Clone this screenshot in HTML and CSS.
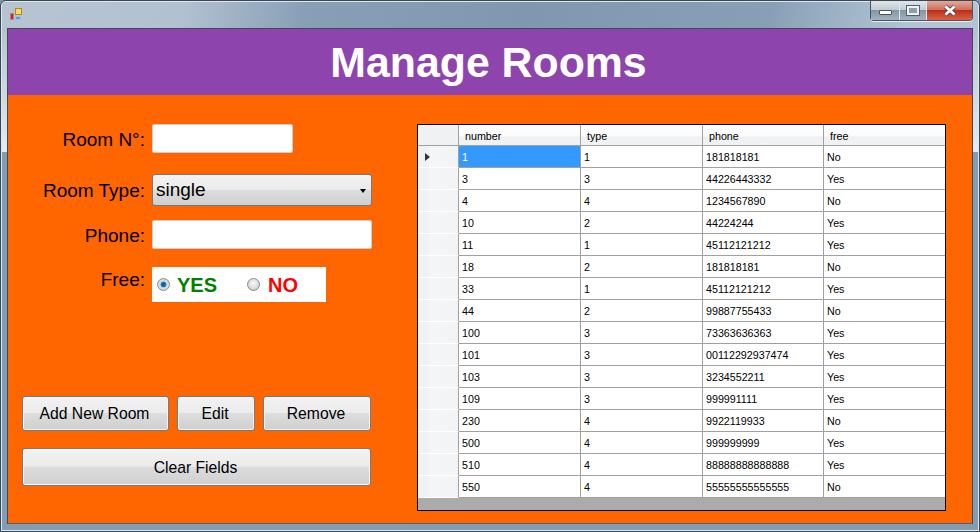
FILE: index.html
```html
<!DOCTYPE html>
<html lang="en">
<head>
<meta charset="utf-8">
<title>Manage Rooms</title>
<link rel="stylesheet" href="styles.css">
</head>
<body>
<div class="window">
  <div class="titlebar">
    <svg class="app-icon" width="14" height="14" viewBox="0 0 14 14">
      <rect x="0.5" y="5.5" width="3" height="6" fill="#c22" stroke="#a88"/>
      <rect x="5.5" y="0.5" width="6" height="6" fill="#fbd95f" stroke="#b8860b"/>
      <rect x="5.5" y="8.5" width="5" height="3" fill="#5b9be8" stroke="#9cc0ee"/>
    </svg>
    <div class="controls">
      <div class="ctl ctl-min"><span class="min-glyph"></span></div>
      <div class="ctl ctl-max"><span class="max-glyph"></span></div>
      <div class="ctl ctl-close">
        <svg width="14" height="11" viewBox="0 0 14 11"><path d="M2.5 1.5 L11.5 9.5 M11.5 1.5 L2.5 9.5" stroke="#4a4a4a" stroke-width="4.4" fill="none"/><path d="M2.5 1.5 L11.5 9.5 M11.5 1.5 L2.5 9.5" stroke="#fff" stroke-width="2.8" fill="none"/></svg>
      </div>
    </div>
  </div>
  <div class="client">
    <header class="banner"><h1>Manage Rooms</h1></header>
    <main class="content">
      <section class="form">
        <div class="fields">
          <div class="row row-room">
            <label class="lbl">Room N°:</label>
            <input class="text text-short" type="text">
          </div>
          <div class="row row-type">
            <label class="lbl">Room Type:</label>
            <div class="combo"><span>single</span><i class="arrow"></i></div>
          </div>
          <div class="row row-phone">
            <label class="lbl">Phone:</label>
            <input class="text" type="text">
          </div>
          <div class="row row-free">
            <label class="lbl lbl-free">Free:</label>
            <div class="radios">
              <span class="radio on"></span><span class="yes">YES</span>
              <span class="radio"></span><span class="no">NO</span>
            </div>
          </div>
        </div>
        <div class="actions">
          <div class="btn-row">
            <button class="btn btn-add">Add New Room</button>
            <button class="btn btn-edit">Edit</button>
            <button class="btn btn-remove">Remove</button>
          </div>
          <button class="btn btn-clear">Clear Fields</button>
        </div>
      </section>
      <section class="grid">
        <table>
          <colgroup><col class="c0"><col class="c1"><col class="c1"><col class="c3"><col class="c4"></colgroup>
          <thead><tr><th class="corner"></th><th>number</th><th>type</th><th>phone</th><th>free</th></tr></thead>
          <tbody>
            <tr class="current"><th class="rh"><i class="marker"></i></th><td class="sel">1</td><td>1</td><td>181818181</td><td>No</td></tr>
            <tr><th class="rh"></th><td>3</td><td>3</td><td>44226443332</td><td>Yes</td></tr>
            <tr><th class="rh"></th><td>4</td><td>4</td><td>1234567890</td><td>No</td></tr>
            <tr><th class="rh"></th><td>10</td><td>2</td><td>44224244</td><td>Yes</td></tr>
            <tr><th class="rh"></th><td>11</td><td>1</td><td>45112121212</td><td>Yes</td></tr>
            <tr><th class="rh"></th><td>18</td><td>2</td><td>181818181</td><td>No</td></tr>
            <tr><th class="rh"></th><td>33</td><td>1</td><td>45112121212</td><td>Yes</td></tr>
            <tr><th class="rh"></th><td>44</td><td>2</td><td>99887755433</td><td>No</td></tr>
            <tr><th class="rh"></th><td>100</td><td>3</td><td>73363636363</td><td>Yes</td></tr>
            <tr><th class="rh"></th><td>101</td><td>3</td><td>00112292937474</td><td>Yes</td></tr>
            <tr><th class="rh"></th><td>103</td><td>3</td><td>3234552211</td><td>Yes</td></tr>
            <tr><th class="rh"></th><td>109</td><td>3</td><td>999991111</td><td>Yes</td></tr>
            <tr><th class="rh"></th><td>230</td><td>4</td><td>9922119933</td><td>No</td></tr>
            <tr><th class="rh"></th><td>500</td><td>4</td><td>999999999</td><td>Yes</td></tr>
            <tr><th class="rh"></th><td>510</td><td>4</td><td>88888888888888</td><td>Yes</td></tr>
            <tr><th class="rh"></th><td>550</td><td>4</td><td>55555555555555</td><td>No</td></tr>
          </tbody>
        </table>
      </section>
    </main>
  </div>
</div>
</body>
</html>
```
FILE: styles.css
```css
* { box-sizing: border-box; }
html, body { margin: 0; padding: 0; }
body {
  width: 980px;
  height: 532px;
  overflow: hidden;
  font-family: "Liberation Sans", Arial, sans-serif;
  color: #000;
  background: #7d96ae;
}
.window {
  width: 980px;
  height: 532px;
  padding: 0 6px 7px;
  border: 1px solid #3c4650;
  border-radius: 6px 6px 0 0;
  box-shadow: inset 0 0 0 1px #dfe7ef;
  background:
    linear-gradient(180deg, transparent 151px, #819db5 151px),
    linear-gradient(180deg, rgba(225, 233, 240, 0) 30px, rgba(232, 238, 243, 0.95) 150px),
    linear-gradient(100deg, #b6c4d2 0, #b2c1d0 180px, #88a0b6 300px, #7f98b0 520px, #88a0b6 760px, #b3c5d4 900px, #b0c2d1 100%);
  display: flex;
  flex-direction: column;
}
.titlebar {
  height: 27px;
  flex: none;
  display: flex;
  justify-content: space-between;
  align-items: flex-start;
}
.app-icon { margin: 7px 0 0 3px; }
.controls {
  display: flex;
  height: 20px;
  margin-right: 0;
  border: 1px solid #48535e;
  border-top: 0;
  border-radius: 0 0 4px 4px;
  box-shadow: 0 1px 0 #e8eef4;
}
.ctl {
  display: flex;
  align-items: center;
  justify-content: center;
  border-left: 1px solid #e2e8ee;
}
.ctl:first-child { border-left: 0; }
.ctl-min, .ctl-max { background: linear-gradient(#dfe5ea 0, #c2ccd5 45%, #8496a6 50%, #a3b2be 100%); }
.ctl-min { width: 28px; align-items: flex-end; padding-bottom: 5px; }
.ctl-max { width: 27px; }
.ctl-close { width: 46px; background: linear-gradient(#e2a89c 0, #d0705c 45%, #b8301c 50%, #cf4a2c 75%, #d6604a 100%); border-radius: 0 0 3px 0; }
.min-glyph { width: 13px; height: 5px; background: #fff; border: 1px solid #4a5560; border-radius: 1px; }
.max-glyph { width: 12px; height: 9px; background: #8e9eac; border: 2px solid #eef1f4; outline: 1px solid #55606b; }

.client {
  flex: 1;
  display: flex;
  flex-direction: column;
  min-height: 0;
  background: #ff6600;
  border: 1px solid #3f4a54;
  border-bottom-color: #55606b;
}
.banner {
  height: 66px;
  flex: none;
  background: #8e44ad;
  text-align: center;
  padding-right: 3px;
}
.banner h1 {
  margin: 0;
  font-size: 42.8px;
  line-height: 66px;
  font-weight: 700;
  color: #fff;
}
.content {
  flex: 1;
  display: flex;
  align-items: flex-start;
  padding: 29px 0 0 13px;
}
.form {
  width: 396px;
  flex: none;
}
.fields {
  display: flex;
  flex-direction: column;
  align-items: stretch;
}
.row {
  display: grid;
  grid-template-columns: 124px auto;
  column-gap: 7px;
  justify-content: start;
  align-items: center;
}
.row-type { margin-top: 21px; }
.row-phone { margin-top: 14px; }
.row-free { margin-top: 18px; align-items: start; }
.lbl {
  font-size: 19px;
  line-height: 20px;
  margin-top: 2px;
  text-align: right;
  white-space: nowrap;
}
.lbl-free { margin-top: 3px; }
.text {
  display: block;
  width: 220px;
  height: 29px;
  padding: 0 3px;
  border: 1px solid #c8ced6;
  border-radius: 2px;
  background: #fff;
  font: 18px "Liberation Sans", Arial, sans-serif;
}
.text-short { width: 141px; }
.combo {
  position: relative;
  width: 220px;
  height: 32px;
  padding-left: 3px;
  border: 1px solid #707a85;
  border-radius: 3px;
  background: linear-gradient(#f2f2f2 0, #ebebeb 48%, #dddddd 50%, #cfcfcf 100%);
  font-size: 19px;
  line-height: 30px;
}
.arrow {
  position: absolute;
  right: 5px;
  top: 14px;
  width: 0;
  height: 0;
  border: 3.5px solid transparent;
  border-top: 4px solid #000;
  border-bottom: 0;
}
.radios {
  display: flex;
  align-items: center;
  width: 174px;
  height: 35px;
  padding-left: 5px;
  background: #fff;
  font-size: 20px;
  font-weight: 700;
}
.radio {
  width: 13px;
  height: 13px;
  flex: none;
  border-radius: 50%;
  border: 1px solid #8d8d8d;
  background: radial-gradient(circle at 50% 40%, #fafafa 0, #dcdcdc 55%, #bbb 100%);
}
.radio.on { background: radial-gradient(circle, #0d4f86 0, #1c7fc4 34%, #d8dde2 42%, #d0d0d0 100%); }
.yes { color: #008000; margin: 1px 31px 0 7px; width: 39px; }
.no { color: #ff0000; margin: 1px 0 0 8px; }

.actions { margin-top: 94px; margin-left: 1px; width: 349px; }
.btn-row { display: flex; gap: 8px; }
.btn {
  display: block;
  height: 35px;
  padding: 0 2px 0 0;
  border: 1px solid #707a85;
  border-radius: 3px;
  background: linear-gradient(#f2f2f2 0, #ebebeb 48%, #dddddd 50%, #cfcfcf 100%);
  box-shadow: inset 0 0 0 1px #fbfbfb;
  font: 15.7px "Liberation Sans", Arial, sans-serif;
  color: #000;
}
.btn-add { width: 147px; }
.btn-edit { width: 78px; }
.btn-remove { width: 108px; }
.btn-clear { width: 349px; height: 38px; margin-top: 17px; padding-top: 2px; }

.grid {
  width: 529px;
  height: 387px;
  flex: none;
  border: 1px solid #000;
  background: #ababab;
}
table {
  border-collapse: separate;
  border-spacing: 0;
  table-layout: fixed;
  width: 527px;
  font-size: 10.7px;
}
.c0 { width: 41px; }
.c1 { width: 122px; }
.c3 { width: 121px; }
.c4 { width: 121px; }
thead th {
  height: 21px;
  padding: 2px 0 0 6px;
  text-align: left;
  font-weight: 400;
  border-right: 1px solid #a0a0a0;
  border-bottom: 1px solid #a0a0a0;
  background: linear-gradient(#fff 0, #fbfbfc 55%, #eff0f2 60%, #f1f2f3 100%);
}
thead th:last-child { border-right: 0; }
thead .corner { background: #f0f1f3; border-right-color: #a0a0a0; padding: 0; }
tbody td {
  height: 22px;
  padding: 0 0 0 3px;
  background: #fff;
  border-right: 1px solid #a0a0a0;
  border-bottom: 1px solid #a0a0a0;
  white-space: nowrap;
  overflow: hidden;
}
tbody td:last-child { border-right: 0; }
tbody td.sel { background: #3399ff; color: #fff; }
.rh {
  position: relative;
  padding: 0;
  border-right: 1px solid #a0a0a0;
  border-bottom: 1px solid #fff;
  background: linear-gradient(90deg, #f0f1f3 0, #f0f1f3 10px, #f5f6f7 12px, #f2f3f4 100%);
}
.marker {
  position: absolute;
  left: 7px;
  top: 7px;
  width: 0;
  height: 0;
  border: 4px solid transparent;
  border-left: 5px solid #333;
  border-right: 0;
}
```
